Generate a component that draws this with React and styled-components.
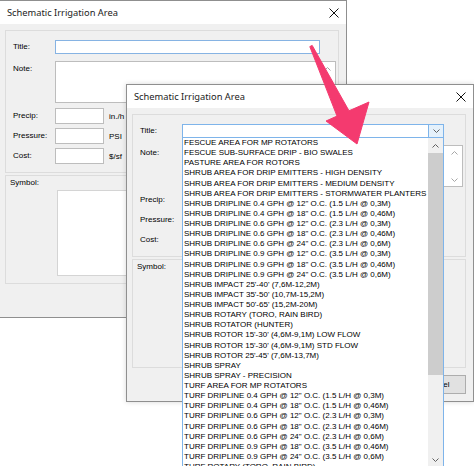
import React from 'react';
import styled, { createGlobalStyle } from 'styled-components';

const GlobalStyle = createGlobalStyle`
  html, body { margin: 0; padding: 0; background: #fff; }
  body { font-family: "Liberation Sans", Arial, sans-serif; color: #000; }
`;

const Desktop = styled.div`
  position: relative;
  width: 474px;
  height: 466px;
  overflow: hidden;
  background: #fff;
`;

const Win = styled.div`
  position: absolute;
  left: ${p => p.$x}px;
  top: ${p => p.$y}px;
  width: 348px;
  height: 318px;
  box-sizing: border-box;
  border: 1px solid #8f8f8f;
  background: #f0f0f0;
  display: flex;
  flex-direction: column;
  box-shadow: ${p => (p.$active ? '0 0 5px rgba(0, 0, 0, 0.16)' : 'none')};
`;

const TitleBar = styled.div`
  height: 23px;
  flex: none;
  background: #fff;
  display: flex;
  align-items: center;
  justify-content: space-between;
  padding: 0 7px 0 7px;
`;

const Caption = styled.span`
  font-family: "Noto Sans", "Open Sans", sans-serif;
  font-size: 9.3px;
  color: #1b1b1b;
`;

const Client = styled.div`
  flex: 1;
  display: flex;
  flex-direction: column;
  padding: 6px 7px 0 5px;
`;

const Group = styled.div`
  box-sizing: border-box;
  height: ${p => p.$h}px;
  border: 1px solid #dcdcdc;
  display: flex;
  flex-direction: column;
  padding: ${p => p.$pad};
  margin-top: ${p => p.$mt || 0}px;
`;

const Row = styled.div`
  display: flex;
  align-items: ${p => (p.$top ? 'flex-start' : 'center')};
  margin-top: ${p => p.$mt || 0}px;
`;

const Label = styled.span`
  width: ${p => p.$w || 42}px;
  flex: none;
  font-size: 8px;
  line-height: 10px;
  padding-top: ${p => p.$pt || 0}px;
`;

const Field = styled.div`
  box-sizing: border-box;
  width: ${p => p.$w}px;
  height: ${p => p.$h}px;
  background: #fff;
  border: 1px solid ${p => (p.$focus ? '#86b3e3' : '#bdbdbd')};
  position: relative;
  display: flex;
`;

const NoteScroll = styled.div`
  margin-left: auto;
  width: 16px;
  display: flex;
  flex-direction: column;
  justify-content: space-between;
  align-items: center;
  padding: 5px 0 4px;
`;

const Unit = styled.span`
  font-size: 8px;
  margin-left: 5px;
`;

const SymbolBox = styled.div`
  box-sizing: border-box;
  width: 200px;
  height: 86px;
  margin: 2px 0 0 47px;
  background: #fff;
  border: 1px solid #d4d4d4;
`;

const Footer = styled.div`
  display: flex;
  justify-content: flex-end;
  gap: 6px;
  padding-top: 7px;
`;

const Button = styled.div`
  box-sizing: border-box;
  width: 58px;
  height: 19px;
  background: #e1e1e1;
  border: 1px solid #adadad;
  font-size: 8px;
  display: flex;
  align-items: center;
  justify-content: center;
`;

const Combo = styled.div`
  position: relative;
  box-sizing: border-box;
  width: 262px;
  height: 14px;
  background: #fff;
  border: 1px solid #7eb4ea;
  display: flex;
  justify-content: flex-end;
`;

const DropButton = styled.div`
  width: 14px;
  background: #e5f1fb;
  border-left: 1px solid #7eb4ea;
  display: flex;
  align-items: center;
  justify-content: center;
`;

const List = styled.div`
  position: absolute;
  left: -1px;
  top: 13px;
  width: 262px;
  height: 330px;
  box-sizing: border-box;
  background: #fff;
  border: 1px solid #7eb4ea;
  border-top: none;
  display: flex;
  z-index: 5;
`;

const Items = styled.div`
  flex: 1;
  overflow: hidden;
  padding-left: 1px;
`;

const Item = styled.div`
  font-size: 8px;
  line-height: 10.13px;
  height: 10.13px;
  white-space: nowrap;
`;

const ScrollBar = styled.div`
  width: 15px;
  display: flex;
  flex-direction: column;
  background: #f0f0f0;
`;

const ScrollArrow = styled.div`
  height: 15px;
  flex: none;
  display: flex;
  align-items: center;
  justify-content: center;
`;

const Thumb = styled.div`
  height: 222px;
  flex: none;
  background: #cdcdcd;
`;

const Track = styled.div`
  flex: 1;
`;

const Overlay = styled.svg`
  position: absolute;
  left: 0;
  top: 0;
  pointer-events: none;
  z-index: 10;
`;

const Chevron = ({ up, color = '#606060' }) => (
  <svg width="7" height="4" viewBox="0 0 7 4">
    <polyline
      points={up ? '0.5,3.5 3.5,0.5 6.5,3.5' : '0.5,0.5 3.5,3.5 6.5,0.5'}
      fill="none"
      stroke={color}
      strokeWidth="1"
    />
  </svg>
);

const CloseIcon = () => (
  <svg width="10" height="10" viewBox="0 0 10 10">
    <path d="M0.5 0.5 L9.5 9.5 M9.5 0.5 L0.5 9.5" stroke="#111" strokeWidth="1" />
  </svg>
);

const items = [
  'FESCUE AREA FOR MP ROTATORS',
  'FESCUE SUB-SURFACE DRIP - BIO SWALES',
  'PASTURE AREA FOR ROTORS',
  'SHRUB AREA FOR DRIP EMITTERS - HIGH DENSITY',
  'SHRUB AREA FOR DRIP EMITTERS - MEDIUM DENSITY',
  'SHRUB AREA FOR DRIP EMITTERS - STORMWATER PLANTERS',
  'SHRUB DRIPLINE 0.4 GPH @ 12" O.C. (1.5 L/H @ 0,3M)',
  'SHRUB DRIPLINE 0.4 GPH @ 18" O.C. (1.5 L/H @ 0,46M)',
  'SHRUB DRIPLINE 0.6 GPH @ 12" O.C. (2.3 L/H @ 0,3M)',
  'SHRUB DRIPLINE 0.6 GPH @ 18" O.C. (2.3 L/H @ 0,46M)',
  'SHRUB DRIPLINE 0.6 GPH @ 24" O.C. (2.3 L/H @ 0,6M)',
  'SHRUB DRIPLINE 0.9 GPH @ 12" O.C. (3.5 L/H @ 0,3M)',
  'SHRUB DRIPLINE 0.9 GPH @ 18" O.C. (3.5 L/H @ 0,46M)',
  'SHRUB DRIPLINE 0.9 GPH @ 24" O.C. (3.5 L/H @ 0,6M)',
  "SHRUB IMPACT 25'-40' (7,6M-12,2M)",
  "SHRUB IMPACT 35'-50' (10,7M-15,2M)",
  "SHRUB IMPACT 50'-65' (15,2M-20M)",
  'SHRUB ROTARY (TORO, RAIN BIRD)',
  'SHRUB ROTATOR (HUNTER)',
  "SHRUB ROTOR 15'-30' (4,6M-9,1M) LOW FLOW",
  "SHRUB ROTOR 15'-30' (4,6M-9,1M) STD FLOW",
  "SHRUB ROTOR 25'-45' (7,6M-13,7M)",
  'SHRUB SPRAY',
  'SHRUB SPRAY - PRECISION',
  'TURF AREA FOR MP ROTATORS',
  'TURF DRIPLINE 0.4 GPH @ 12" O.C. (1.5 L/H @ 0,3M)',
  'TURF DRIPLINE 0.4 GPH @ 18" O.C. (1.5 L/H @ 0,46M)',
  'TURF DRIPLINE 0.6 GPH @ 12" O.C. (2.3 L/H @ 0,3M)',
  'TURF DRIPLINE 0.6 GPH @ 18" O.C. (2.3 L/H @ 0,46M)',
  'TURF DRIPLINE 0.6 GPH @ 24" O.C. (2.3 L/H @ 0,6M)',
  'TURF DRIPLINE 0.9 GPH @ 18" O.C. (3.5 L/H @ 0,46M)',
  'TURF DRIPLINE 0.9 GPH @ 24" O.C. (3.5 L/H @ 0,6M)',
  'TURF ROTARY (TORO, RAIN BIRD)',
];

const numberFields = [
  { label: 'Precip:', unit: 'in./h', mt: 5 },
  { label: 'Pressure:', unit: 'PSI', mt: 4 },
  { label: 'Cost:', unit: '$/sf', mt: 4 },
];

const TitleCombo = () => (
  <Combo>
    <DropButton>
      <Chevron />
    </DropButton>
    <List>
      <Items>
        {items.map(t => (
          <Item key={t}>{t}</Item>
        ))}
      </Items>
      <ScrollBar>
        <ScrollArrow>
          <Chevron up />
        </ScrollArrow>
        <Thumb />
        <Track />
        <ScrollArrow>
          <Chevron />
        </ScrollArrow>
      </ScrollBar>
    </List>
  </Combo>
);

const Dialog = ({ x, y, dropdown }) => (
  <Win $x={x} $y={y} $active={dropdown}>
    <TitleBar>
      <Caption>Schematic Irrigation Area</Caption>
      <CloseIcon />
    </TitleBar>
    <Client>
      <Group $h={143} $pad="9px 0 0 7px">
        <Row>
          <Label>Title:</Label>
          {dropdown ? <TitleCombo /> : <Field $w={265} $h={14} $focus />}
        </Row>
        <Row $mt={7} $top>
          <Label $pt={3}>Note:</Label>
          <Field $w={281} $h={42}>
            <NoteScroll>
              <Chevron up color="#a6a6a6" />
              <Chevron color="#a6a6a6" />
            </NoteScroll>
          </Field>
        </Row>
        {numberFields.map(f => (
          <Row key={f.label} $mt={f.mt}>
            <Label>{f.label}</Label>
            <Field $w={49} $h={16} />
            <Unit>{f.unit}</Unit>
          </Row>
        ))}
      </Group>
      <Group $h={109} $mt={2} $pad="2px 0 0 4px">
        <Label $w={60}>Symbol:</Label>
        <SymbolBox />
      </Group>
      <Footer>
        <Button>OK</Button>
        <Button>Cancel</Button>
      </Footer>
    </Client>
  </Win>
);

const Arrow = () => (
  <Overlay width="474" height="466" viewBox="0 0 474 466">
    <polygon
      points="312.2,45.4 349,110.8 369,102 357,144 326,121 337,116.1 309.8,46.6"
      fill="#f43a6f"
      stroke="#f43a6f"
      strokeWidth="1"
      strokeLinejoin="round"
    />
  </Overlay>
);

export default function App() {
  return (
    <Desktop>
      <GlobalStyle />
      <Dialog x={-1} y={0} />
      <Dialog x={126} y={84} dropdown />
      <Arrow />
    </Desktop>
  );
}
